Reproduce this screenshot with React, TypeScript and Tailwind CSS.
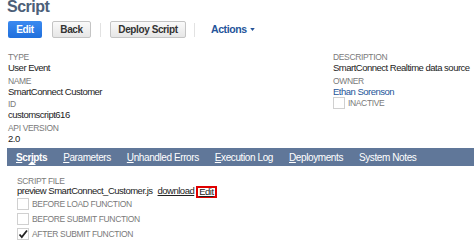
import React from 'react';

const fieldsLeft = [
  { label: 'TYPE', value: 'User Event' },
  { label: 'NAME', value: 'SmartConnect Customer' },
  { label: 'ID', value: 'customscript616' },
  { label: 'API VERSION', value: '2.0' },
];

const tabs = [
  { first: 'S', rest: 'cripts', active: true },
  { first: 'P', rest: 'arameters' },
  { first: 'U', rest: 'nhandled Errors' },
  { first: 'E', rest: 'xecution Log' },
  { first: 'D', rest: 'eployments' },
  { first: '', rest: 'System Notes' },
];

const Field = ({ label, children }: { label: string; children: React.ReactNode }) => (
  <div className="h-[23.5px]">
    <div className="text-[8.5px] leading-[10px] tracking-[-0.35px] text-[#7a7a7a]">{label}</div>
    <div className="whitespace-nowrap text-[9.5px] leading-[12px] tracking-[-0.5px] text-[#222]">{children}</div>
  </div>
);

const Box = ({ checked }: { checked?: boolean }) => (
  <span className="relative inline-block h-[12px] w-[12px] shrink-0 border border-[#d0d0d0] bg-white">
    {checked && (
      <svg viewBox="0 0 12 12" className="absolute left-[-1px] top-[-1px] h-[12px] w-[12px]">
        <path d="M2.5 6.5 L4.8 9 L10 2.5" stroke="#222" strokeWidth="1.8" fill="none" />
      </svg>
    )}
  </span>
);

const GrayButton = ({ children, w }: { children: React.ReactNode; w: string }) => (
  <button
    className={`h-[17px] ${w} rounded-[2px] border border-[#c4c4c4] bg-gradient-to-b from-[#fafafa] to-[#e6e6e6] text-[10px] font-bold tracking-[-0.4px] text-[#333]`}
  >
    {children}
  </button>
);

export default function App() {
  return (
    <div
      className="h-[245px] w-[474px] overflow-hidden bg-white"
      style={{ fontFamily: '"Liberation Sans", Arial, sans-serif' }}
    >
      <h1 className="-mt-[2px] pl-[7px] text-[16px] font-bold leading-[18px] tracking-[-0.5px] text-[#4d5f79]">Script</h1>

      <div className="mt-[5px] flex items-center pl-[8px]">
        <button className="h-[17px] w-[34px] rounded-[2px] bg-gradient-to-b from-[#3b8af0] to-[#1f6fdc] text-[10px] font-bold tracking-[-0.3px] text-white">
          Edit
        </button>
        <span className="ml-[10px]" />
        <GrayButton w="w-[39px]">Back</GrayButton>
        <span className="mx-[9px] h-[14px] w-px bg-[#e2e2e2]" />
        <GrayButton w="w-[76px]">Deploy Script</GrayButton>
        <span className="mx-[8px] h-[14px] w-px bg-[#e2e2e2]" />
        <span className="ml-[8px] flex items-center text-[10.5px] font-bold tracking-[-0.4px] text-[#25549a]">
          Actions
          <svg viewBox="0 0 6 4" className="ml-[3px] h-[3px] w-[5px]">
            <path d="M0 0 L6 0 L3 4 Z" fill="#25549a" />
          </svg>
        </span>
      </div>

      <div className="mt-[14px] flex pl-[8px]">
        <div className="w-[325px]">
          {fieldsLeft.map((f) => (
            <Field key={f.label} label={f.label}>
              {f.value}
            </Field>
          ))}
        </div>
        <div>
          <Field label="DESCRIPTION">SmartConnect Realtime data source</Field>
          <Field label="OWNER">
            <span className="text-[#255599]">Ethan Sorenson</span>
          </Field>
          <div className="-mt-[2px] flex items-center gap-[3px]">
            <Box />
            <span className="text-[8.5px] tracking-[-0.35px] text-[#7a7a7a]">INACTIVE</span>
          </div>
        </div>
      </div>

      <div className="ml-[7px] mt-[2px] flex h-[18px] items-center gap-[16px] bg-[#607799] pl-[9px] text-[10px] tracking-[-0.4px] text-white">
        {tabs.map((t) => (
          <span key={t.rest} className={`relative shrink-0 whitespace-nowrap ${t.active ? 'font-bold' : ''}`}>
            <span className="underline">{t.first}</span>
            {t.rest}
            {t.active && (
              <span className="absolute left-[12px] top-[11px] h-0 w-0 border-x-[4px] border-b-[4px] border-x-transparent border-b-white" />
            )}
          </span>
        ))}
      </div>

      <div className="mt-[11px] pl-[17px]">
        <div className="text-[8.5px] leading-[9px] tracking-[-0.35px] text-[#7a7a7a]">SCRIPT FILE</div>
        <div className="flex h-[11px] items-center whitespace-nowrap text-[9.5px] tracking-[-0.5px] text-[#222]">
          <span>preview SmartConnect_Customer.js</span>
          <span className="ml-[5px] underline">download</span>
          <span className="ml-[2px] border-2 border-[#e00000] px-[1px] leading-[8px] underline">Edit</span>
        </div>
        {['BEFORE LOAD FUNCTION', 'BEFORE SUBMIT FUNCTION', 'AFTER SUBMIT FUNCTION'].map((l, i) => (
          <div key={l} className={`${i === 0 ? 'mt-[1px]' : 'mt-[3px]'} flex h-[12px] items-center gap-[3px]`}>
            <Box checked={i === 2} />
            <span className="text-[8.5px] tracking-[-0.35px] text-[#7a7a7a]">{l}</span>
          </div>
        ))}
      </div>
    </div>
  );
}
